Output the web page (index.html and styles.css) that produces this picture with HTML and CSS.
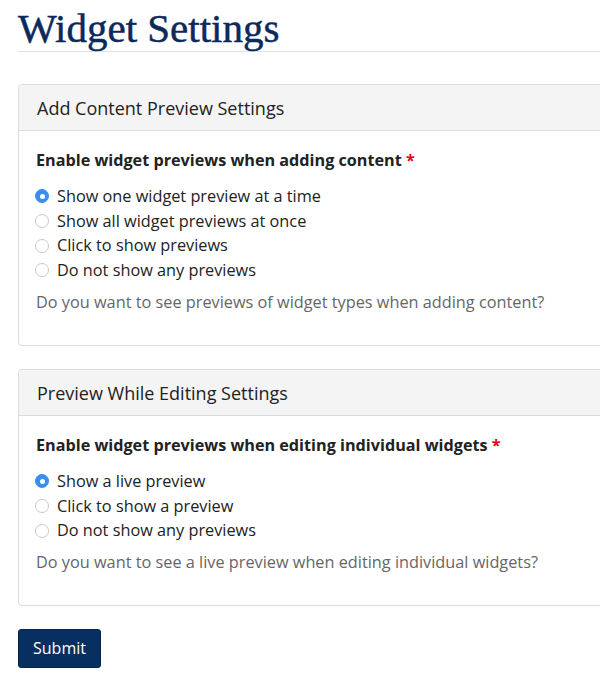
FILE: index.html
```html
<!DOCTYPE html>
<html>
<head>
<meta charset="utf-8">
<link rel="stylesheet" href="styles.css">
</head>
<body>
<div class="page">
  <h1 class="title">Widget Settings</h1>
  <form class="form">
    <section class="panel">
      <div class="panel-head">Add Content Preview Settings</div>
      <div class="panel-body">
        <div class="field-label">Enable widget previews when adding content <span class="req">*</span></div>
        <ul class="options">
          <li class="option"><span class="radio checked"></span>Show one widget preview at a time</li>
          <li class="option"><span class="radio"></span>Show all widget previews at once</li>
          <li class="option"><span class="radio"></span>Click to show previews</li>
          <li class="option"><span class="radio"></span>Do not show any previews</li>
        </ul>
        <p class="help">Do you want to see previews of widget types when adding content?</p>
      </div>
    </section>
    <section class="panel">
      <div class="panel-head">Preview While Editing Settings</div>
      <div class="panel-body">
        <div class="field-label">Enable widget previews when editing individual widgets <span class="req">*</span></div>
        <ul class="options">
          <li class="option"><span class="radio checked"></span>Show a live preview</li>
          <li class="option"><span class="radio"></span>Click to show a preview</li>
          <li class="option"><span class="radio"></span>Do not show any previews</li>
        </ul>
        <p class="help">Do you want to see a live preview when editing individual widgets?</p>
      </div>
    </section>
    <button type="button" class="submit">Submit</button>
  </form>
</div>
</body>
</html>
```
FILE: styles.css
```css
html, body {
  margin: 0;
  padding: 0;
  overflow: hidden;
  background: #fff;
}
body {
  font-family: "Open Sans", "Noto Sans", sans-serif;
  color: #222;
  width: 600px;
  height: 681px;
}
.page {
  padding-left: 18px;
  width: 640px;
}
.title {
  font-family: "Liberation Serif", serif;
  font-weight: normal;
  color: #0b2a5b;
  font-size: 41px;
  line-height: 46px;
  margin: 0;
  padding-top: 5px;
  height: 46px;
  border-bottom: 1px solid #e2e2e2;
  -webkit-text-stroke: 0.5px #0b2a5b;
}
.form {
  padding-top: 32px;
}
.panel {
  border: 1px solid #dcdcdc;
  border-radius: 4px;
  margin-bottom: 23px;
}
.panel-head {
  background: #f4f4f4;
  border-bottom: 1px solid #dcdcdc;
  border-radius: 4px 4px 0 0;
  height: 45px;
  line-height: 46px;
  padding-left: 18px;
  font-size: 18px;
  color: #222;
}
.panel-body {
  padding: 17px 17px 31px;
}
.field-label {
  font-weight: bold;
  font-size: 16.2px;
  line-height: 24px;
  color: #222;
}
.req {
  color: #e2001a;
}
.options {
  list-style: none;
  margin: 12px 0 0;
  padding: 0;
}
.option {
  display: flex;
  align-items: center;
  font-size: 16.3px;
  line-height: 24.7px;
  color: #222;
}
.radio {
  width: 12px;
  height: 12px;
  border: 1px solid #c9c9c9;
  border-radius: 50%;
  margin-left: -1px;
  margin-right: 8px;
  box-sizing: content-box;
  background: #fff;
  position: relative;
}
.radio.checked {
  background: #3a8ef2;
  border-color: #3a8ef2;
}
.radio.checked::after {
  content: "";
  position: absolute;
  left: 3.5px;
  top: 3.5px;
  width: 5px;
  height: 5px;
  border-radius: 50%;
  background: #fff;
}
.help {
  margin: 7px 0 0;
  font-size: 16.3px;
  line-height: 24px;
  color: #666;
}
.submit {
  display: block;
  background: #072f5f;
  color: #fff;
  border: 1px solid #05264d;
  border-radius: 3px;
  font-family: "Open Sans", sans-serif;
  font-size: 16px;
  padding: 0;
  width: 83px;
  height: 39px;
  margin-top: 0;
}
```
